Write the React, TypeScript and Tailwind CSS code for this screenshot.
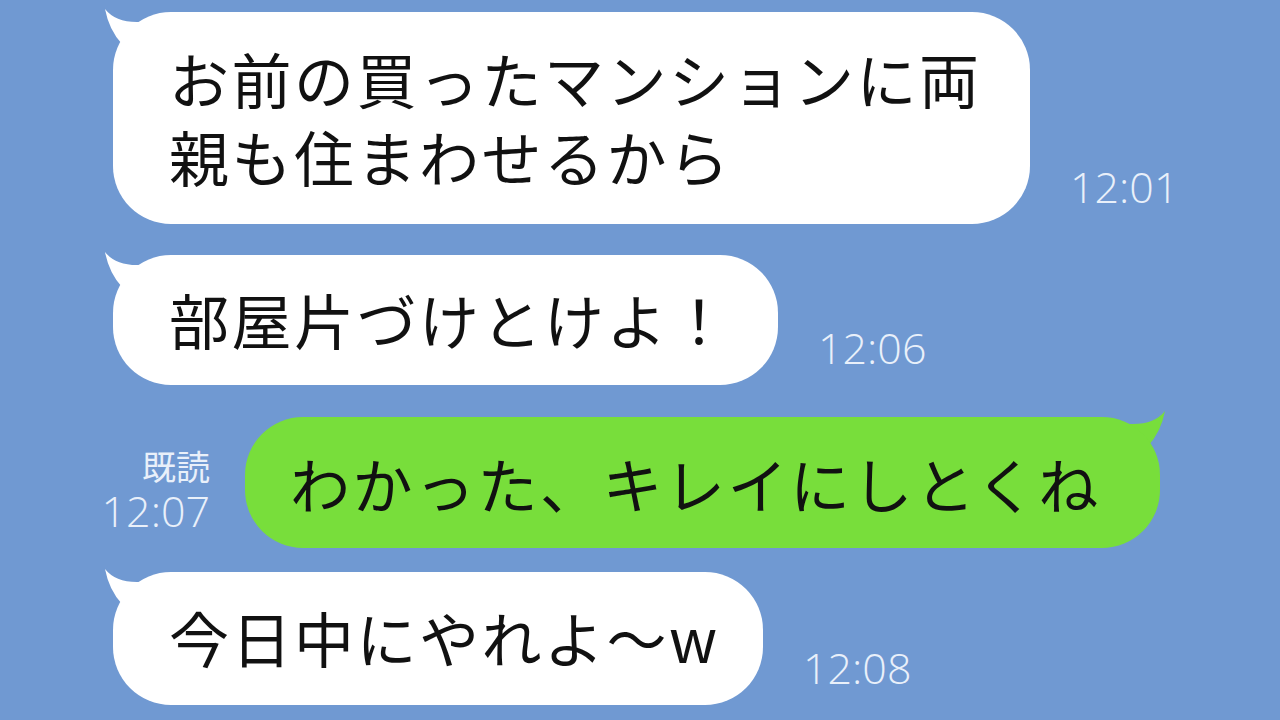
const jp = { fontFamily: '"Noto Sans CJK JP", "Noto Sans", sans-serif' };
const time = { fontFamily: '"Open Sans", "Liberation Sans", sans-serif' };

function Tail({ color, right }: { color: string; right?: boolean }) {
  return (
    <svg
      width="60"
      height="60"
      viewBox="0 0 60 60"
      className={right ? "absolute -right-[6px] -top-[7px] -scale-x-100" : "absolute -left-[9px] -top-[4px]"}
    >
      <path d="M1 1 Q12 15 36 14 L60 12 L60 60 L18 60 L18 36 Q5 22 1 1 Z" fill={color} />
    </svg>
  );
}

function Stamp({ t }: { t: string }) {
  return (
    <span className="ml-[40px] mb-[15px] text-[43px] leading-[44px] font-light text-[#e9f0fa]" style={time}>
      {t}
    </span>
  );
}

function Left({ w, h, t, children }: { w: string; h: string; t: string; children: React.ReactNode }) {
  return (
    <div className="flex items-end pl-[113px]">
      <div className={`relative ${w} ${h} flex items-center`}>
        <Tail color="#ffffff" />
        <div
          className="relative w-full h-full flex items-center bg-white rounded-[58px] pl-[56px] pb-[3px] text-[60px] leading-[78px] tracking-[2.5px] text-[#111] whitespace-nowrap"
          style={jp}
        >
          <div>{children}</div>
        </div>
      </div>
      <Stamp t={t} />
    </div>
  );
}

export default function App() {
  return (
    <div className="w-[1280px] h-[720px] overflow-hidden bg-[#7099d2] pt-[12px] flex flex-col">
      <Left w="w-[917px]" h="h-[212px]" t="12:01">
        お前の買ったマンションに両
        <br />
        親も住まわせるから
      </Left>
      <div className="h-[31px]" />
      <Left w="w-[665px]" h="h-[130px]" t="12:06">
        部屋片づけとけよ！
      </Left>
      <div className="h-[32px]" />
      <div className="flex items-end pl-[95px]">
        <div className="w-[115px] mb-[14px] flex flex-col items-end text-[#e9f0fa]">
          <span className="text-[34px] leading-[36px] mb-[4px]" style={jp}>既読</span>
          <span className="text-[43px] leading-[46px] font-light" style={time}>12:07</span>
        </div>
        <div className="relative ml-[35px] w-[915px] h-[131px]">
          <Tail color="#78de3b" right />
          <div
            className="relative w-full h-full flex items-center bg-[#78de3b] rounded-[58px] pl-[45px] text-[60px] leading-[78px] tracking-[2.5px] text-[#111] whitespace-nowrap"
            style={jp}
          >
            わかった、キレイにしとくね
          </div>
        </div>
      </div>
      <div className="h-[24px]" />
      <Left w="w-[650px]" h="h-[133px]" t="12:08">
        今日中にやれよ〜w
      </Left>
    </div>
  );
}
